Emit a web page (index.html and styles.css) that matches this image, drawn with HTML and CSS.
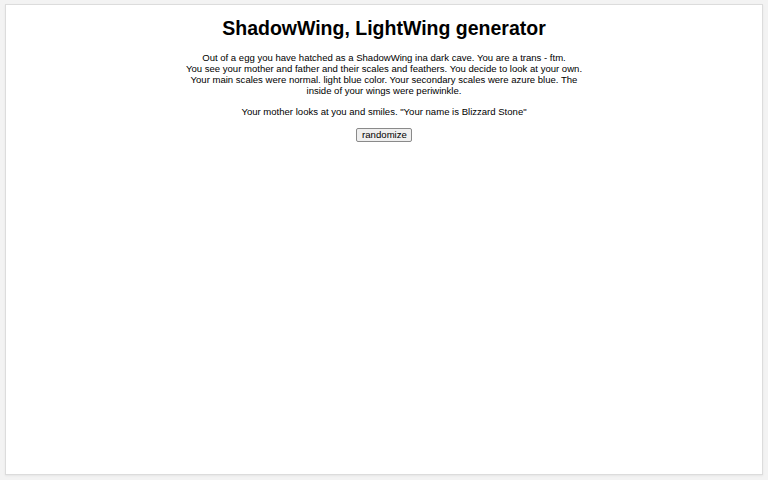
FILE: index.html
```html
<!DOCTYPE html>
<html lang="en">
<head>
<meta charset="utf-8">
<title>ShadowWing, LightWing generator</title>
<link rel="stylesheet" href="styles.css">
</head>
<body>
<main class="sheet">
  <h1 class="title">ShadowWing, LightWing generator</h1>
  <p class="story">Out of a egg you have hatched as a ShadowWing ina dark cave. You are a trans - ftm.<br>You see your mother and father and their scales and feathers. You decide to look at your own.<br>Your main scales were normal. light blue color. Your secondary scales were azure blue. The<br>inside of your wings were periwinkle.</p>
  <p class="story">Your mother looks at you and smiles. "Your name is Blizzard Stone"</p>
  <button class="roll" type="button">randomize</button>
</main>
</body>
</html>
```
FILE: styles.css
```css
html, body {
  height: 100%;
}

body {
  margin: 0;
  padding: 4px 5px 5px 5px;
  box-sizing: border-box;
  background: #f3f3f3;
  font-family: "Liberation Sans", Arial, sans-serif;
  color: #000;
}

.sheet {
  height: 100%;
  box-sizing: border-box;
  background: #fff;
  border: 1px solid #dcdcdc;
  box-shadow: 0 1px 2px rgba(0, 0, 0, 0.06);
  display: flex;
  flex-direction: column;
  align-items: center;
  text-align: center;
}

.title {
  margin: 11px 0 0 0;
  font-size: 19.5px;
  line-height: 24px;
  font-weight: bold;
}

.story {
  margin: 12px 0 0 0;
  font-size: 9.55px;
  line-height: 11px;
}

.story + .story {
  margin-top: 10px;
}

.roll {
  margin-top: 11px;
  font-family: "Liberation Sans", Arial, sans-serif;
  font-size: 9.6px;
  line-height: 12px;
  padding: 0 4px 0 5px;
  background: #efefef;
  border: 1px solid #8a8a8a;
  border-radius: 2px;
  color: #000;
}
```
